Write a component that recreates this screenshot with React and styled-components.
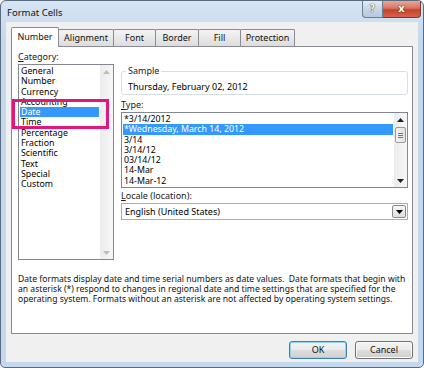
import React from "react";
import styled, { createGlobalStyle } from "styled-components";

const FONT = `"Noto Sans", "DejaVu Sans", sans-serif`;

const GlobalStyle = createGlobalStyle`
  html, body {
    margin: 0;
    padding: 0;
    background: #fff;
  }
  body {
    font-family: ${FONT};
    font-size: 9px;
    color: #000;
  }
  * {
    box-sizing: border-box;
  }
`;

const Frame = styled.div`
  width: 424px;
  height: 368px;
  border: 1px solid #5a6b80;
  border-radius: 6px 6px 5px 5px;
  background: linear-gradient(#d7e5f4, #c3d7ed 40px, #c4d9ef);
  padding: 0 5px 5px;
  display: flex;
  flex-direction: column;
`;

const TitleBar = styled.div`
  height: 21px;
  display: flex;
  justify-content: space-between;
  align-items: flex-start;
`;

const Title = styled.div`
  font-size: 9.5px;
  line-height: 23px;
  padding-left: 1px;
  color: #111;
`;

const Controls = styled.div`
  display: flex;
  margin-right: -3px;
`;

const HelpButton = styled.div`
  width: 21px;
  height: 17px;
  border: 1px solid #6c7d93;
  border-top: none;
  border-radius: 0 0 0 4px;
  background: linear-gradient(#e3ecf6, #c7d6e7 50%, #b6c9de);
  color: #fff;
  font-weight: bold;
  font-size: 10px;
  line-height: 15px;
  text-align: center;
  text-shadow: 0 0 1px #333, 0 0 1px #333;
`;

const CloseButton = styled.div`
  width: 38px;
  height: 17px;
  border: 1px solid #7a3b30;
  border-top: none;
  border-left: none;
  border-radius: 0 0 4px 0;
  background: linear-gradient(#e9a898, #d6735e 45%, #c5432b 55%, #d5614a);
  color: #fff;
  font-weight: bold;
  font-size: 11px;
  line-height: 14px;
  text-align: center;
  text-shadow: 0 0 1px #5a1a10, 0 0 1px #5a1a10;
`;

const Client = styled.div`
  flex: 1;
  background: #f0f0f0;
  padding: 5px 5px 3px;
  display: flex;
  flex-direction: column;
`;

const Tabs = styled.div`
  display: flex;
  height: 20px;
  align-items: flex-start;
  position: relative;
  z-index: 1;
`;

const Tab = styled.div`
  width: ${(p) => p.$w}px;
  height: ${(p) => (p.$active ? 20 : 17)}px;
  margin-top: ${(p) => (p.$active ? 0 : 2)}px;
  margin-left: -1px;
  border: 1px solid #898c95;
  border-bottom: none;
  border-radius: 2px 2px 0 0;
  background: ${(p) =>
    p.$active ? "#fff" : "linear-gradient(#f4f4f4, #e8e8e8 50%, #dcdcdc)"};
  text-align: center;
  line-height: ${(p) => (p.$active ? 18 : 15)}px;
  color: #111;
  position: relative;
  z-index: ${(p) => (p.$active ? 2 : 1)};

  &:first-child {
    margin-left: 0;
  }
`;

const Panel = styled.div`
  margin-top: -1px;
  height: 288px;
  border: 1px solid #898c95;
  background: #fff;
  padding: 5px 4px 0 6px;
  display: flex;
  flex-direction: column;
`;

const Top = styled.div`
  display: flex;
  gap: 7px;
`;

const LeftCol = styled.div`
  width: 96px;
  position: relative;
  display: flex;
  flex-direction: column;
`;

const RightCol = styled.div`
  flex: 1;
  display: flex;
  flex-direction: column;
`;

const Label = styled.div`
  height: 10px;
  line-height: 10px;
  margin: ${(p) => p.$mt || 0}px 0 2px;
  color: #1a1a1a;
`;

const Ul = styled.span`
  text-decoration: underline;
`;

const ListBox = styled.div`
  height: ${(p) => p.$h}px;
  border: 1px solid #828790;
  display: flex;
  background: #fff;
`;

const Items = styled.div`
  flex: 1;
  padding: 1px 1px 0;
  overflow: hidden;
`;

const Item = styled.div`
  height: 10.3px;
  line-height: 10.3px;
  font-size: 8.8px;
  padding-left: 1px;
  white-space: nowrap;
  background: ${(p) => (p.$selected ? "#3399ff" : "transparent")};
  color: ${(p) => (p.$selected ? "#fff" : "#000")};
`;

const Scrollbar = styled.div`
  width: 13px;
  display: flex;
  flex-direction: column;
  background: linear-gradient(90deg, #ececec, #f7f7f7);
`;

const ArrowBox = styled.div`
  height: 13px;
  display: flex;
  align-items: center;
  justify-content: center;
  color: ${(p) => (p.$disabled ? "#bcbcbc" : "#222")};
`;

const Track = styled.div`
  flex: 1;
  display: flex;
  flex-direction: column;
  padding-top: 1px;
`;

const Thumb = styled.div`
  height: 16px;
  margin: 0 1px;
  border: 1px solid #9a9a9a;
  border-radius: 2px;
  background: linear-gradient(90deg, #f3f3f3, #e2e2e2);
  display: flex;
  flex-direction: column;
  align-items: center;
  justify-content: center;
  gap: 1px;

  span {
    width: 5px;
    height: 1px;
    background: #777;
  }
`;

const Highlight = styled.div`
  position: absolute;
  left: -6px;
  top: 47px;
  width: 97px;
  height: 30px;
  border: 3px solid #e1177d;
  pointer-events: none;
`;

const Group = styled.fieldset`
  margin: 14px 0 0;
  padding: 0 6px 2px;
  border: 1px solid #d5dfe5;
  border-radius: 3px;
  min-width: 0;
`;

const Legend = styled.legend`
  padding: 0 2px;
  margin-left: -2px;
  line-height: 10px;
  color: #222;
`;

const SampleValue = styled.div`
  line-height: 10px;
  margin-top: 6px;
`;

const Combo = styled.div`
  height: 17px;
  border: 1px solid #abadb3;
  display: flex;
  align-items: center;
  padding: 0 1px 0 3px;
`;

const ComboText = styled.div`
  flex: 1;
`;

const DropButton = styled.div`
  width: 14px;
  height: 13px;
  border: 1px solid #8a8a8a;
  border-radius: 2px;
  background: linear-gradient(#f6f6f6, #dedede);
  display: flex;
  align-items: center;
  justify-content: center;
`;

const Description = styled.div`
  margin-top: 14px;
  font-size: 8.6px;
  line-height: 10px;
  white-space: nowrap;
  color: #111;
`;

const ButtonRow = styled.div`
  display: flex;
  justify-content: flex-end;
  gap: 8px;
  margin-top: 7px;
`;

const Button = styled.div`
  width: 58px;
  height: 18px;
  border: 1px solid ${(p) => (p.$default ? "#3c7fb1" : "#707070")};
  border-radius: 3px;
  background: linear-gradient(#f2f2f2, #ebebeb 50%, #dddddd 51%, #cfcfcf);
  box-shadow: ${(p) =>
    p.$default ? "inset 0 0 0 1px #8fd3f5" : "inset 0 0 0 1px #fcfcfc"};
  text-align: center;
  line-height: 16px;
  color: #111;
`;

const Arrow = ({ down }) => (
  <svg width="7" height="4" viewBox="0 0 7 4">
    <polygon
      points={down ? "0,0 7,0 3.5,4" : "0,4 7,4 3.5,0"}
      fill="currentColor"
    />
  </svg>
);

const categories = [
  "General",
  "Number",
  "Currency",
  "Accounting",
  "Date",
  "Time",
  "Percentage",
  "Fraction",
  "Scientific",
  "Text",
  "Special",
  "Custom",
];

const types = [
  "*3/14/2012",
  "*Wednesday, March 14, 2012",
  "3/14",
  "3/14/12",
  "03/14/12",
  "14-Mar",
  "14-Mar-12",
];

const tabs = [
  ["Number", 48],
  ["Alignment", 56],
  ["Font", 43],
  ["Border", 44],
  ["Fill", 43],
  ["Protection", 55],
];

export default function App() {
  return (
    <>
      <GlobalStyle />
      <Frame>
        <TitleBar>
          <Title>Format Cells</Title>
          <Controls>
            <HelpButton>?</HelpButton>
            <CloseButton>x</CloseButton>
          </Controls>
        </TitleBar>
        <Client>
          <Tabs>
            {tabs.map(([name, w], i) => (
              <Tab key={name} $w={w} $active={i === 0}>
                {name}
              </Tab>
            ))}
          </Tabs>
          <Panel>
            <Top>
              <LeftCol>
                <Label>
                  <Ul>C</Ul>ategory:
                </Label>
                <ListBox $h={196}>
                  <Items>
                    {categories.map((c) => (
                      <Item key={c} $selected={c === "Date"}>
                        {c}
                      </Item>
                    ))}
                  </Items>
                  <Scrollbar>
                    <ArrowBox $disabled>
                      <Arrow />
                    </ArrowBox>
                    <Track />
                    <ArrowBox $disabled>
                      <Arrow down />
                    </ArrowBox>
                  </Scrollbar>
                </ListBox>
                <Highlight />
              </LeftCol>
              <RightCol>
                <Group>
                  <Legend>Sample</Legend>
                  <SampleValue>Thursday, February 02, 2012</SampleValue>
                </Group>
                <Label $mt={5}>
                  <Ul>T</Ul>ype:
                </Label>
                <ListBox $h={76}>
                  <Items>
                    {types.map((t, i) => (
                      <Item key={t} $selected={i === 1}>
                        {t}
                      </Item>
                    ))}
                  </Items>
                  <Scrollbar>
                    <ArrowBox>
                      <Arrow />
                    </ArrowBox>
                    <Track>
                      <Thumb>
                        <span />
                        <span />
                        <span />
                      </Thumb>
                    </Track>
                    <ArrowBox>
                      <Arrow down />
                    </ArrowBox>
                  </Scrollbar>
                </ListBox>
                <Label $mt={3}>
                  <Ul>L</Ul>ocale (location):
                </Label>
                <Combo>
                  <ComboText>English (United States)</ComboText>
                  <DropButton>
                    <Arrow down />
                  </DropButton>
                </Combo>
              </RightCol>
            </Top>
            <Description>
              Date formats display date and time serial numbers as date values.&nbsp; Date formats that begin with
              <br />
              an asterisk (*) respond to changes in regional date and time settings that are specified for the
              <br />
              operating system. Formats without an asterisk are not affected by operating system settings.
            </Description>
          </Panel>
          <ButtonRow>
            <Button $default>OK</Button>
            <Button>Cancel</Button>
          </ButtonRow>
        </Client>
      </Frame>
    </>
  );
}
